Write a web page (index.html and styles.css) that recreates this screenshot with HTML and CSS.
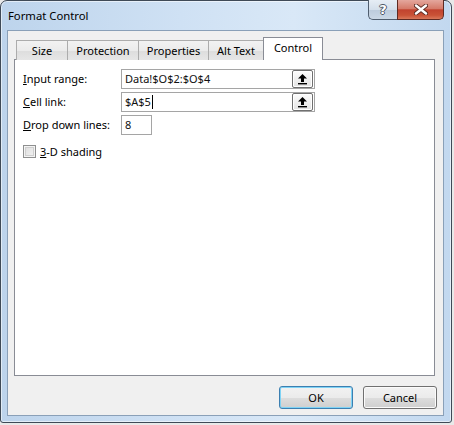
FILE: index.html
```html
<!DOCTYPE html>
<html>
<head>
<meta charset="utf-8">
<link rel="stylesheet" href="styles.css">
</head>
<body>
<div class="window">
  <div class="titlebar">
    <span class="title">Format Control</span>
    <div class="caption-buttons">
      <div class="cap-btn help"><span>?</span></div>
      <div class="cap-btn close">
        <svg width="14" height="11" viewBox="0 0 14 11">
          <path d="M2 1.5 L12 9.5 M12 1.5 L2 9.5" stroke="#5a2a22" stroke-width="4.2" stroke-linecap="round" fill="none"/>
          <path d="M2 1.5 L12 9.5 M12 1.5 L2 9.5" stroke="#ffffff" stroke-width="2.4" stroke-linecap="round" fill="none"/>
        </svg>
      </div>
    </div>
  </div>
  <div class="client">
    <div class="tabs">
      <div class="tab w-size">Size</div>
      <div class="tab w-prot">Protection</div>
      <div class="tab w-prop">Properties</div>
      <div class="tab w-alt">Alt Text</div>
      <div class="tab selected">Control</div>
    </div>
    <div class="panel">
      <div class="form">
        <label class="lbl"><u>I</u>nput range:</label>
        <div class="field wide">
          <span class="val">Data!$O$2:$O$4</span>
          <div class="ref-btn">
            <svg width="11" height="12" viewBox="0 0 11 12">
              <path d="M5.5 1 L10 5.5 L7 5.5 L7 9 L4 9 L4 5.5 L1 5.5 Z" fill="#000"/>
              <rect x="1" y="10" width="9" height="1.4" fill="#000"/>
            </svg>
          </div>
        </div>
        <label class="lbl"><u>C</u>ell link:</label>
        <div class="field wide">
          <span class="val">$A$5<span class="caret"></span></span>
          <div class="ref-btn">
            <svg width="11" height="12" viewBox="0 0 11 12">
              <path d="M5.5 1 L10 5.5 L7 5.5 L7 9 L4 9 L4 5.5 L1 5.5 Z" fill="#000"/>
              <rect x="1" y="10" width="9" height="1.4" fill="#000"/>
            </svg>
          </div>
        </div>
        <label class="lbl"><u>D</u>rop down lines:</label>
        <div class="field narrow"><span class="val">8</span></div>
      </div>
      <div class="check-row">
        <span class="checkbox"></span>
        <span class="check-label"><u>3</u>-D shading</span>
      </div>
    </div>
    <div class="buttons">
      <div class="btn default">OK</div>
      <div class="btn">Cancel</div>
    </div>
  </div>
</div>
</body>
</html>
```

FILE: styles.css
```css
html, body {
  margin: 0;
  padding: 0;
}
body {
  background: #e9e9e9;
  width: 454px;
  height: 425px;
  overflow: hidden;
  font-family: "Noto Sans", "Liberation Sans", sans-serif;
  font-size: 11px;
  color: #000;
}
.window {
  box-sizing: border-box;
  width: 452px;
  height: 423px;
  border: 1px solid #3f4a57;
  border-radius: 7px 7px 3px 3px;
  background: linear-gradient(to right, #bdd4ec 0%, #cfe1f4 40%, #d9e8f7 65%, #c2d8ef 100%);
  box-shadow: inset 0 0 0 1px rgba(255,255,255,0.55);
  padding: 0 7px 6px 6px;
  display: flex;
  flex-direction: column;
}
.titlebar {
  height: 29px;
  display: flex;
  align-items: flex-start;
}
.title {
  margin-left: 1px;
  line-height: 29px;
  font-size: 11.3px;
  color: #000;
  flex: 1;
}
.caption-buttons {
  display: flex;
  margin-top: -1px;
}
.cap-btn {
  box-sizing: border-box;
  height: 20px;
  display: flex;
  align-items: center;
  justify-content: center;
  border: 1px solid #4f5d6e;
  border-top: none;
}
.help {
  width: 29px;
  border-radius: 0 0 0 5px;
  border-right: none;
  background: linear-gradient(#e6edf5 0%, #d4dfeb 50%, #bccbdc 51%, #cbd8e6 100%);
}
.help span {
  font-family: "DejaVu Sans", sans-serif;
  font-weight: bold;
  font-size: 13px;
  color: #fff;
  text-shadow: 1px 0 0 #4e5866, -1px 0 0 #4e5866, 0 1px 0 #4e5866, 0 -1px 0 #4e5866;
  line-height: 1;
}
.close {
  width: 47px;
  border-radius: 0 0 5px 0;
  border-color: #5e2a22;
  background: linear-gradient(#e4a79d 0%, #d57b6a 45%, #c1432f 52%, #c95236 80%, #d9785a 100%);
}
.client {
  flex: 1;
  border: 1px solid #8aa0b8;
  background: #f0f0f0;
  padding: 7px 8px 0 6px;
  display: flex;
  flex-direction: column;
}
.tabs {
  display: flex;
  align-items: flex-end;
  padding-left: 2px;
  height: 22px;
  margin-bottom: -1px;
  position: relative;
  z-index: 1;
}
.tab {
  box-sizing: border-box;
  height: 20px;
  border: 1px solid #acacac;
  border-bottom: none;
  border-left: none;
  background: linear-gradient(#f2f2f2 0%, #ebebeb 50%, #dddddd 51%, #e6e6e6 100%);
  text-align: center;
  line-height: 19px;
  font-size: 11px;
}
.tab.w-size { width: 52px; border-left: 1px solid #acacac; }
.tab.w-prot { width: 71px; }
.tab.w-prop { width: 70px; }
.tab.w-alt { width: 55px; }
.tab.selected {
  width: 60px;
  height: 23px;
  margin-left: -1px;
  border: 1px solid #898c95;
  border-bottom: none;
  background: #fff;
  line-height: 20px;
}
.panel {
  box-sizing: border-box;
  height: 317px;
  border: 1px solid #898c95;
  background: #fff;
  padding: 9px 8px 0 8px;
}
.form {
  display: grid;
  grid-template-columns: 98px auto;
  grid-auto-rows: 20px;
  row-gap: 3px;
  align-items: center;
  justify-items: start;
}
.lbl {
  line-height: 20px;
}
.field {
  box-sizing: border-box;
  height: 20px;
  border: 1px solid #a5a5a5;
  background: #fff;
  display: flex;
  align-items: center;
}
.field.wide { width: 194px; }
.field.narrow { width: 31px; }
.val {
  flex: 1;
  padding-left: 3px;
  line-height: 18px;
  color: #111;
  display: flex;
  align-items: center;
}
.caret {
  display: inline-block;
  width: 1px;
  height: 14px;
  background: #000;
  margin-left: 1px;
}
.ref-btn {
  box-sizing: border-box;
  width: 21px;
  height: 18px;
  margin-right: 1px;
  border: 1px solid #707070;
  border-radius: 2px;
  background: linear-gradient(#fdfdfd 0%, #f0f0f0 50%, #e3e3e3 100%);
  display: flex;
  align-items: center;
  justify-content: center;
  box-shadow: inset 0 0 0 1px #fff;
}
.check-row {
  display: flex;
  align-items: center;
  margin-top: 10px;
  height: 13px;
}
.checkbox {
  box-sizing: border-box;
  width: 13px;
  height: 13px;
  border: 1px solid #8e8f8f;
  background: linear-gradient(135deg, #dcdcdc 0%, #f4f4f4 100%);
  box-shadow: inset 0 0 0 1px #f4f4f4, inset 0 0 0 2px #cfcfcf;
  margin-right: 4px;
}
.check-label {
  line-height: 13px;
}
.buttons {
  display: flex;
  justify-content: flex-end;
  gap: 10px;
  margin-top: 10px;
  margin-right: -2px;
}
.btn {
  box-sizing: border-box;
  width: 74px;
  height: 23px;
  border: 1px solid #707070;
  border-radius: 3px;
  background: linear-gradient(#f2f2f2 0%, #ebebeb 50%, #dddddd 51%, #cfcfcf 100%);
  box-shadow: inset 0 0 0 1px #fbfbfb;
  text-align: center;
  line-height: 21px;
}
.btn.default {
  border-color: #3c7fb1;
  box-shadow: inset 0 0 0 1px #7fd3f5;
}
```
